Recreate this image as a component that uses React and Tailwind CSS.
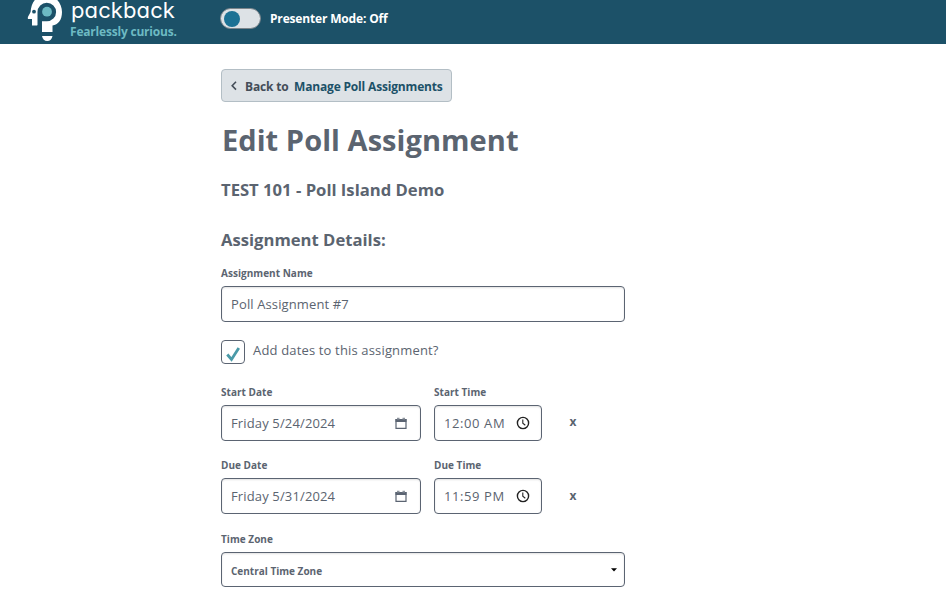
const DATE_ROWS = [
  { name: 'Start', date: 'Friday 5/24/2024', time: '12:00 AM', className: 'mt-5', clearClassName: 'mt-[30px]' },
  { name: 'Due', date: 'Friday 5/31/2024', time: '11:59 PM', className: 'mt-4', clearClassName: 'mt-[31px]' },
]

function Logo() {
  return (
    <div className="flex w-[190px] shrink-0">
      <svg className="ml-[27px] shrink-0" width="37" height="44" viewBox="0 0 37 44">
        <path
          d="M15 25 H10.5 V25.500 H5 V19 H1.5 C.5 19 .7 17 1.300 16.200 L3.600 12 C4 3 9 -5 19 -5 C28 -5 35 3 35 12 C35 20 31 25 25.500 25.500 V32 H15 Z"
          fill="#fff"
        />
        <path d="M10.500 26 V12 A9.300 9.300 0 1 1 19.800 21.300 H15 V26 Z" fill="#1c5168" />
        <circle cx="20" cy="11.700" r="4.900" fill="#6dbac3" />
        <circle cx="7" cy="11.700" r="1.900" fill="#1c5168" />
        <path d="M15 36 H25.500 C25 39 23 41 20.200 41 C17.500 41 15.500 39 15 36 Z" fill="#fff" />
      </svg>
      <div className="ml-[7px] text-white">
        <div className="mb-1 h-5 font-['Inter',sans-serif] text-[22px] leading-5 tracking-[0.1px] [font-feature-settings:'cv11']">
          packback
        </div>
        <div className="-ml-px text-[12px] leading-4 font-bold tracking-[-0.2px] whitespace-nowrap text-[#6dbac3]">
          Fearlessly curious.
        </div>
      </div>
    </div>
  )
}

function CalendarIcon() {
  return (
    <svg width="12" height="12" viewBox="0 0 12 12" fill="none">
      <path d="M1 2.500 H11 V11.300 H1 Z" stroke="#5b6472" strokeWidth="1.200" />
      <path d="M.5 2 H11.500 V5 H.5 Z" fill="#5b6472" />
      <path d="M2 .7 H4.500 V2.500 H2 Z M7.500 .7 H10 V2.500 H7.500 Z" fill="#8b929b" />
    </svg>
  )
}

function ClockIcon() {
  return (
    <svg width="14" height="14" viewBox="0 0 14 14" fill="none" stroke="#222">
      <circle cx="7" cy="7" r="5.600" strokeWidth="1.400" />
      <path d="M6.800 3.500 V7.300 L9.300 9.200" strokeWidth="1.100" />
    </svg>
  )
}

function Label({ children, className = '' }) {
  return <div className={`h-4 text-[10px] leading-4 font-bold tracking-[0.03px] ${className}`}>{children}</div>
}

function Field({ children, className = '' }) {
  return (
    <div
      className={`mt-[5px] flex h-9 items-center justify-between rounded border border-[#5b6472] bg-white pl-[9px] text-[13px] shadow-[inset_0_1px_2px_rgba(0,0,0,0.12)] ${className}`}
    >
      {children}
    </div>
  )
}

export default function App() {
  return (
    <div className="h-[597px] overflow-hidden bg-white font-['Open_Sans',sans-serif] text-[#5b6470]">
      <header className="flex h-11 bg-[#1c5168]">
        <Logo />
        <div className="ml-[30px] flex h-[37px] items-center">
          <div className="flex h-[21px] w-[41px] items-center rounded-full border border-[#7c858b] bg-[#dde2e6] pl-[3px]">
            <div className="size-4 rounded-full bg-[#1c7194]" />
          </div>
          <span className="ml-[9px] text-[12px] font-bold tracking-[-0.17px] text-white">Presenter Mode: Off</span>
        </div>
      </header>

      <main className="ml-[221px] w-[404px] pt-[25px]">
        <button className="flex h-[33px] w-[231px] items-center rounded border border-[#b3bec5] bg-[#dde2e6] pl-[9px] text-[12px] font-bold tracking-[-0.17px] whitespace-nowrap">
          <svg width="6" height="10" viewBox="0 0 6 10" fill="none" stroke="#444d58" strokeWidth="1.600">
            <path d="M5 .8 L1.200 4.700 L5 8.600" />
          </svg>
          <span className="ml-2 w-[43px] pt-0.5 text-[#444d58]">Back to</span>
          <span className="ml-1.5 pt-0.5 text-[#1c5168]">Manage Poll Assignments</span>
        </button>

        <h1 className="mt-[18px] ml-px h-10 text-[29px] leading-10 font-bold tracking-[0.06px] whitespace-nowrap">
          Edit Poll Assignment
        </h1>
        <h2 className="mt-[18px] h-6 text-[16.65px] leading-6 font-bold">TEST 101 - Poll Island Demo</h2>
        <h2 className="mt-[26px] h-6 text-[16.65px] leading-6 font-bold">Assignment Details:</h2>

        <Label className="mt-[13px]">Assignment Name</Label>
        <Field>
          <span className="pt-0.5 tracking-[0.12px]">Poll Assignment #7</span>
        </Field>

        <div className="mt-[18px] flex h-6">
          <div className="flex size-6 items-center justify-center rounded border border-[#5b6472]">
            <svg className="mt-1" width="16" height="16" viewBox="0 0 16 16" fill="none" stroke="#4a9aa8" strokeWidth="2.800">
              <path d="M2.300 8.500 L6.500 13.500 L13.800 2" />
            </svg>
          </div>
          <span className="ml-2 text-[13px] leading-5 tracking-[0.16px]">Add dates to this assignment?</span>
        </div>

        {/* Start and due rows */}
        {DATE_ROWS.map((row) => (
          <div key={row.name} className={`flex ${row.className}`}>
            <div className="w-[200px]">
              <Label>{row.name} Date</Label>
              <Field className="pr-[13px]">
                <span className="pt-0.5 tracking-[0.14px]">{row.date}</span>
                <CalendarIcon />
              </Field>
            </div>
            <div className="ml-[13px] w-[108px]">
              <Label>{row.name} Time</Label>
              <Field className="pr-[11px]">
                <span className="pt-0.5 tracking-[0.6px]">{row.time}</span>
                <ClockIcon />
              </Field>
            </div>
            <button className={`ml-[27.5px] h-4 text-[12px] leading-4 font-bold ${row.clearClassName}`}>x</button>
          </div>
        ))}

        <Label className="mt-[17px]">Time Zone</Label>
        <Field className="h-[35px]! pr-[7px]">
          <span className="pt-[3px] text-[10px] font-bold">Central Time Zone</span>
          <svg width="6" height="4" viewBox="0 0 6 4">
            <path d="M0 .3 H6 L3 3.500 Z" fill="#000" />
          </svg>
        </Field>
      </main>
    </div>
  )
}
